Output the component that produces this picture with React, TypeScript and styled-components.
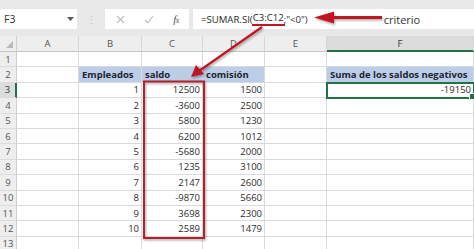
import React from "react";
import styled, { createGlobalStyle, css } from "styled-components";

const Global = createGlobalStyle`
  html, body { margin: 0; padding: 0; background: #fff; overflow: hidden; }
  body { font-family: "Open Sans", "Noto Sans", sans-serif; }
  * { box-sizing: border-box; }
`;

const RED = "#c01822";
const GREEN = "#217346";

const Page = styled.div`
  position: relative;
  width: 474px;
  height: 249px;
  overflow: hidden;
  background: #fff;
`;

const FormulaBar = styled.div`
  display: flex;
  align-items: flex-start;
  height: 36px;
  padding-top: 9px;
  background: #e8e8e8;
`;

const NameBox = styled.div`
  width: 77px;
  height: 20px;
  background: #fff;
  display: flex;
  align-items: center;
  justify-content: space-between;
  padding: 0 3px 0 4px;
  font-size: 10.5px;
  color: #333;
`;

const Grip = styled.div`
  width: 28px;
  height: 20px;
  display: flex;
  align-items: center;
  justify-content: center;
  color: #bdbdbd;
  font-size: 11px;
`;

const ButtonsBox = styled.div`
  width: 84px;
  height: 20px;
  background: #fff;
  display: grid;
  grid-template-columns: 30px 28px 26px;
  align-items: center;
  justify-items: center;
`;

const Fx = styled.span`
  font-family: "Liberation Serif", "DejaVu Serif", serif;
  font-style: italic;
  font-size: 11px;
  color: #555;
  letter-spacing: -0.5px;
  & small { font-size: 8px; }
`;

const FormulaInput = styled.div`
  flex: 1;
  height: 20px;
  margin-left: 4px;
  background: #fff;
  display: flex;
  align-items: center;
  padding-left: 8px;
  font-size: 9.6px;
  color: #2a2a2a;
  white-space: pre;
`;

const Criterio = styled.span`
  margin-left: 76px;
  font-size: 11px;
  color: #333;
`;

const Ref = styled.span`
  display: inline-block;
  border-bottom: 2px solid ${RED};
  line-height: 12px;
  padding: 0 1px;
  margin: 0 -1px;
`;

const Sheet = styled.div`
  display: grid;
  grid-template-columns: 17px 62px 63px 61px 62px 62px 147px;
  grid-template-rows: 16px;
  grid-auto-rows: 15.4px;
  font-size: 9.5px;
  color: #2b2b2b;
`;

const headerBase = css`
  background: #eeeeee;
  color: #555;
  display: flex;
  align-items: center;
  justify-content: center;
  font-size: 9.5px;
`;

const Corner = styled.div`
  ${headerBase};
  border-right: 1px solid #cfcfcf;
  border-bottom: 1px solid #c4c4c4;
  justify-content: flex-end;
  align-items: flex-end;
  padding: 0 3px 3px 0;
`;

const ColHeader = styled.div<{ $selected?: boolean }>`
  ${headerBase};
  border-right: 1px solid #d6d6d6;
  border-bottom: 1px solid #c4c4c4;
  ${(p) =>
    p.$selected &&
    css`
      background: #dcdcdc;
      border-bottom: 2px solid ${GREEN};
      color: #3a3a3a;
    `}
`;

const RowHeader = styled.div<{ $selected?: boolean }>`
  ${headerBase};
  border-right: 1px solid #cfcfcf;
  border-bottom: 1px solid #dcdcdc;
  ${(p) =>
    p.$selected &&
    css`
      background: #dcdcdc;
      border-right: 2px solid ${GREEN};
      color: #3a3a3a;
    `}
`;

const Cell = styled.div<{
  $fill?: boolean;
  $bold?: boolean;
  $right?: boolean;
  $selected?: boolean;
}>`
  position: relative;
  display: flex;
  align-items: center;
  justify-content: ${(p) => (p.$right ? "flex-end" : "flex-start")};
  padding: 0 2px 0 3px;
  border-right: 1px solid #dadada;
  border-bottom: 1px solid #dadada;
  white-space: nowrap;
  overflow: visible;
  background: ${(p) => (p.$fill ? "#bccde8" : "#fff")};
  font-weight: ${(p) => (p.$bold ? 700 : 400)};
  color: ${(p) => (p.$bold ? "#1e2430" : "#2b2b2b")};
  ${(p) =>
    p.$selected &&
    css`
      outline: 2px solid ${GREEN};
      outline-offset: -1px;
      z-index: 1;
      &::after {
        content: "";
        position: absolute;
        right: -3px;
        bottom: -3px;
        width: 5px;
        height: 5px;
        background: ${GREEN};
        border: 1px solid #fff;
      }
    `}
`;

const Overlay = styled.svg`
  position: absolute;
  left: 0;
  top: 0;
  pointer-events: none;
  z-index: 5;
`;

const cols = ["A", "B", "C", "D", "E", "F"];
const saldo = [12500, -3600, 5800, 6200, -5680, 1235, 2147, -9870, 3698, 2589];
const comision = [1500, 2500, 1230, 1012, 2000, 3100, 2600, 5660, 2300, 1479];

type Row = {
  b?: string;
  c?: string;
  d?: string;
  f?: string;
  header?: boolean;
};

const rows: Row[] = [
  {},
  { b: "Empleados", c: "saldo", d: "comisión", f: "Suma de los saldos negativos", header: true },
  ...saldo.map((s, i) => ({
    b: String(i + 1),
    c: String(s),
    d: String(comision[i]),
    f: i === 0 ? "-19150" : undefined,
  })),
  {},
];

export default function App() {
  return (
    <Page>
      <Global />
      <FormulaBar>
        <NameBox>
          <span>F3</span>
          <svg width="7" height="4" viewBox="0 0 7 4">
            <path d="M0 0 L7 0 L3.5 4 Z" fill="#5a5a5a" />
          </svg>
        </NameBox>
        <Grip>⋮</Grip>
        <ButtonsBox>
          <svg width="9" height="9" viewBox="0 0 9 9">
            <path d="M1 1 L8 8 M8 1 L1 8" stroke="#bdbdbd" strokeWidth="1.1" />
          </svg>
          <svg width="10" height="9" viewBox="0 0 10 9">
            <path d="M1 5 L3.8 8 L9 1" stroke="#bdbdbd" strokeWidth="1.1" fill="none" />
          </svg>
          <Fx>
            f<small>x</small>
          </Fx>
        </ButtonsBox>
        <FormulaInput>
          =SUMAR.SI(<Ref>C3:C12</Ref>;"&lt;0")
          <Criterio>criterio</Criterio>
        </FormulaInput>
      </FormulaBar>
      <Sheet>
        <Corner>
          <svg width="7" height="7" viewBox="0 0 7 7">
            <path d="M7 0 L7 7 L0 7 Z" fill="#b9b9b9" />
          </svg>
        </Corner>
        {cols.map((c) => (
          <ColHeader key={c} $selected={c === "F"}>
            {c}
          </ColHeader>
        ))}
        {rows.map((r, i) => {
          const n = i + 1;
          return (
            <React.Fragment key={n}>
              <RowHeader $selected={n === 3}>{n}</RowHeader>
              <Cell />
              <Cell $fill={r.header} $bold={r.header} $right={!r.header}>
                {r.b}
              </Cell>
              <Cell $fill={r.header} $bold={r.header} $right={!r.header}>
                {r.c}
              </Cell>
              <Cell $fill={r.header} $bold={r.header} $right={!r.header}>
                {r.d}
              </Cell>
              <Cell />
              <Cell
                $fill={r.header}
                $bold={r.header}
                $right={!r.header}
                $selected={n === 3}
              >
                {r.f}
              </Cell>
            </React.Fragment>
          );
        })}
      </Sheet>
      <Overlay width="474" height="249" viewBox="0 0 474 249">
        <defs>
          <filter id="sh" x="-20%" y="-20%" width="140%" height="140%">
            <feDropShadow dx="1" dy="1.5" stdDeviation="1.2" floodColor="#000" floodOpacity="0.35" />
          </filter>
        </defs>
        <rect
          x="144"
          y="81.5"
          width="60"
          height="156.5"
          fill="none"
          stroke="#b3202c"
          strokeWidth="2"
          filter="url(#sh)"
        />
        <g filter="url(#sh)">
          <line x1="262" y1="27" x2="199" y2="71" stroke={RED} strokeWidth="2.2" />
          <path d="M191 77 L196 65 L204 74 Z" fill={RED} />
          <line x1="382" y1="17.5" x2="330" y2="17.5" stroke={RED} strokeWidth="3" />
          <path d="M314 17.5 L334 11.5 L334 23.5 Z" fill={RED} />
        </g>
      </Overlay>
    </Page>
  );
}
